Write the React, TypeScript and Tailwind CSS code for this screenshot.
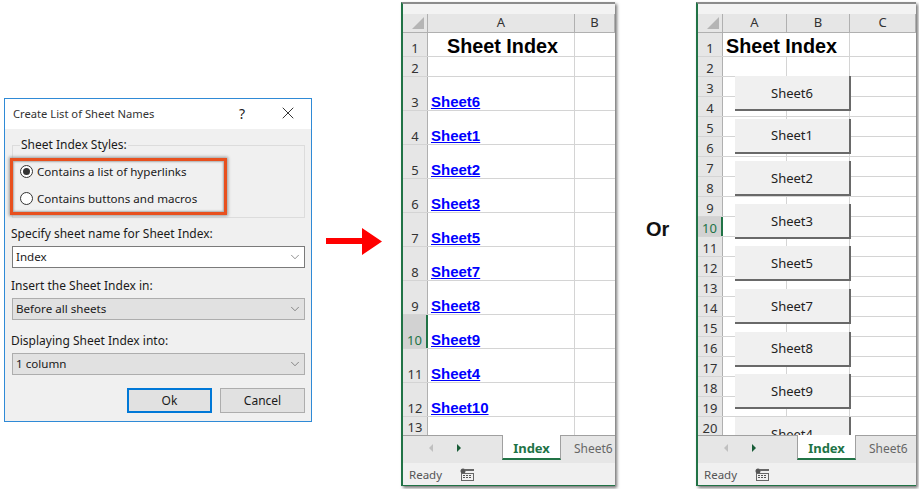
import { ChevronDown, X } from "lucide-react"

const uiFont = "font-['Noto_Sans',sans-serif]"
const cellFont = "font-['Liberation_Sans',Arial,sans-serif]"

function Combo({ value, white }: { value: string; white?: boolean }) {
  return (
    <div
      className={`ml-[7px] flex h-[22px] w-[293px] items-center justify-between pl-[3px] pr-[2px] text-[11.6px] text-[#1a1a1a] border ${
        white ? "border-[#7a7a7a] bg-white" : "border-[#adadad] bg-[#e1e1e1]"
      }`}
    >
      <span>{value}</span>
      <ChevronDown size={14} strokeWidth={1} className="text-[#444]" />
    </div>
  )
}

function Radio({ label, checked }: { label: string; checked?: boolean }) {
  return (
    <div className="flex h-[27px] items-center gap-[4px] pl-[7px] text-[11.6px] text-[#1a1a1a]">
      <div className="flex h-[13px] w-[13px] items-center justify-center rounded-full border border-[#333] bg-white">
        {checked && <div className="h-[7px] w-[7px] rounded-full bg-[#333]" />}
      </div>
      <span>{label}</span>
    </div>
  )
}

function Dialog() {
  return (
    <div className={`mt-[98px] ml-[4px] h-[324px] w-[308px] shrink-0 border border-[#2f8ad6] bg-[#f0f0f0] ${uiFont}`}>
      {/* Title bar */}
      <div className="flex h-[30px] items-center bg-white pl-[8px] text-[11.2px] text-[#333]">
        <span className="w-[226px]">Create List of Sheet Names</span>
        <span className="-mt-[2px] w-[39px] text-[14px] text-[#222]">?</span>
        <X size={20} strokeWidth={1.1} className="-mt-[2px] text-[#222]" />
      </div>

      {/* Styles group */}
      <div className="relative mt-[16px] ml-[7px] h-[73px] w-[293px] border border-[#dcdcdc] pt-[12px]">
        <span className="absolute -top-[9px] left-[7px] bg-[#f0f0f0] px-[1px] text-[12px] leading-[16px] text-[#1a1a1a]">
          Sheet Index Styles:
        </span>
        <Radio label="Contains a list of hyperlinks" checked />
        <Radio label="Contains buttons and macros" />
        <div className="absolute -left-[3px] top-[12px] h-[57px] w-[217px] border-[3px] border-[#e8501e] shadow-[0_0_3px_1px_#999,inset_0_0_2px_1px_#aaa]" />
      </div>

      <div className="mt-[7px] ml-[6px] h-[21px] text-[12px] leading-[18px] text-[#1a1a1a]">
        Specify sheet name for Sheet Index:
      </div>
      <Combo value="Index" white />
      <div className="mt-[9px] ml-[6px] h-[21px] text-[12px] leading-[18px] text-[#1a1a1a]">
        Insert the Sheet Index in:
      </div>
      <Combo value="Before all sheets" />
      <div className="mt-[11px] ml-[6px] h-[22px] pt-px text-[12px] leading-[18px] text-[#1a1a1a]">
        Displaying Sheet Index into:
      </div>
      <Combo value="1 column" />

      {/* Buttons */}
      <div className="mt-[13px] ml-[122px] flex gap-[8px] text-[12px] text-[#1a1a1a]">
        <div className="flex h-[25px] w-[85px] items-center justify-center border-2 border-[#0078d7] bg-[#e1e1e1]">
          Ok
        </div>
        <div className="flex h-[25px] w-[85px] items-center justify-center border border-[#adadad] bg-[#e1e1e1]">
          Cancel
        </div>
      </div>
    </div>
  )
}

function Arrow() {
  return (
    <svg width="56" height="27" viewBox="0 0 56 27" className="mt-[228px] ml-[14px] shrink-0">
      <path d="M0 10h36V0l20 13.5L36 27V16H0z" fill="#ff0000" />
    </svg>
  )
}

function RowNum({ n, active }: { n: number; active?: boolean }) {
  return (
    <div
      className={`flex h-full w-[25px] shrink-0 items-end justify-center border-r border-[#b0b0b0] text-[13px] leading-[16px] ${uiFont} ${
        active ? "border-r-2 border-r-[#217346] bg-[#d2d2d2] text-[#217346]" : "bg-[#e6e6e6] text-[#333]"
      }`}
    >
      {n}
    </div>
  )
}

function TabFooter() {
  return (
    <>
      <div className={`flex h-[28px] shrink-0 border-t border-[#a0a0a0] bg-[#e6e6e6] ${uiFont}`}>
        <div className="flex w-[99px] shrink-0 items-center gap-[24px] pb-[3px] pl-[26px]">
          <div className="h-0 w-0 border-y-[4px] border-r-[4px] border-y-transparent border-r-[#c0c0c0]" />
          <div className="h-0 w-0 border-y-[4px] border-l-[4px] border-y-transparent border-l-[#185c37]" />
        </div>
        <div className="-mt-px flex h-[25px] w-[59px] shrink-0 items-center justify-center border-x border-[#a0a0a0] border-b-[2px] border-b-[#217346] bg-white pt-[4px] text-[13px] font-bold text-[#217346]">
          Index
        </div>
        <div className="pl-[13px] text-[12px] leading-[26px] text-[#666]">Sheet6</div>
      </div>
      <div className={`flex h-[22px] shrink-0 items-center bg-[#f0f0f0] pt-px pl-[6px] text-[11.5px] text-[#555] ${uiFont}`}>
        <span className="w-[51px]">Ready</span>
        <svg width="14" height="13" viewBox="0 0 14 13">
          <circle cx="3" cy="3" r="2.5" fill="#555" />
          <path d="M5 1h9v2H5zM1 5h13v8H1z" fill="#666" />
          <path d="M2 6h11v6H2z" fill="#f0f0f0" />
          <path d="M3 7h2v1H3zM6 7h2v1H6zM9 7h2v1H9zM3 9h2v1H3zM6 9h2v1H6zM9 9h2v1H9z" fill="#555" />
        </svg>
      </div>
    </>
  )
}

function Corner() {
  return (
    <div className="flex h-full w-[25px] shrink-0 items-end justify-end border-r border-[#b0b0b0] bg-[#e6e6e6] pr-[3px] pb-[3px]">
      <div className="h-0 w-0 border-b-[12px] border-l-[12px] border-b-[#b5b5b5] border-l-transparent" />
    </div>
  )
}

function HeadCell({ label, width }: { label: string; width: string }) {
  return (
    <div className={`flex h-full items-center justify-center border-r border-[#b0b0b0] bg-[#e6e6e6] text-[13px] text-[#333] ${uiFont} ${width}`}>
      {label}
    </div>
  )
}

const listRows = [
  [3, "Sheet6"],
  [4, "Sheet1"],
  [5, "Sheet2"],
  [6, "Sheet3"],
  [7, "Sheet5"],
  [8, "Sheet7"],
  [9, "Sheet8"],
  [10, "Sheet9"],
  [11, "Sheet4"],
  [12, "Sheet10"],
] as const

function HyperlinkSheet() {
  return (
    <div className="mt-[2px] ml-[19px] flex h-[484px] w-[214px] shrink-0 flex-col border-t-2 border-b border-l-2 border-t-[#8c8c8c] border-b-[#217346] border-l-[#217346] bg-[#f3f3f3] shadow-[2px_2px_3px_#777]">
      <div className="h-[10px] shrink-0" />
      <div className="flex h-[19px] shrink-0 border-b border-[#b0b0b0]">
        <Corner />
        <HeadCell label="A" width="w-[147px]" />
        <HeadCell label="B" width="flex-1" />
      </div>
      <div className="flex min-h-0 flex-1 flex-col overflow-hidden bg-white">
        <div className="flex h-[24px] shrink-0 border-b border-[#d4d4d4]">
          <RowNum n={1} />
          <div className={`flex w-[147px] items-center justify-center border-r border-[#d4d4d4] pt-[4px] pl-[3px] text-[19.8px] leading-none font-bold text-black ${cellFont}`}>
            Sheet Index
          </div>
        </div>
        <div className="flex h-[20px] shrink-0 border-b border-[#d4d4d4]">
          <RowNum n={2} />
          <div className="w-[147px] border-r border-[#d4d4d4]" />
        </div>
        {listRows.map(([n, name]) => (
          <div key={n} className="flex h-[34px] shrink-0 border-b border-[#d4d4d4]">
            <RowNum n={n} active={n === 10} />
            <div className={`flex w-[147px] items-end border-r border-[#d4d4d4] pl-[3px] text-[15px] leading-[16px] font-bold text-[#0000ff] underline ${cellFont}`}>
              {name}
            </div>
          </div>
        ))}
        <div className="flex h-[18px] shrink-0">
          <RowNum n={13} />
          <div className="w-[147px] border-r border-[#d4d4d4]" />
        </div>
      </div>
      <TabFooter />
    </div>
  )
}

const buttonNames = ["Sheet6", "Sheet1", "Sheet2", "Sheet3", "Sheet5", "Sheet7", "Sheet8", "Sheet9", "Sheet4"]
const macroRows = Array.from({ length: 18 }, (_, i) => i + 3)

function ButtonSheet() {
  return (
    <div className="mt-[2px] ml-[26px] flex h-[484px] w-[220px] shrink-0 flex-col border-t-2 border-b border-l-2 border-t-[#8c8c8c] border-b-[#217346] border-l-[#217346] bg-[#f3f3f3] shadow-[2px_2px_3px_#777]">
      <div className="h-[10px] shrink-0" />
      <div className="flex h-[19px] shrink-0 border-b border-[#b0b0b0]">
        <Corner />
        <HeadCell label="A" width="w-[64px]" />
        <HeadCell label="B" width="w-[63px]" />
        <HeadCell label="C" width="flex-1" />
      </div>
      <div className="relative flex min-h-0 flex-1 flex-col overflow-hidden bg-white">
        <div className="flex h-[24px] shrink-0 border-b border-[#d4d4d4]">
          <RowNum n={1} />
          <div className={`flex w-[127px] items-center border-r border-[#d4d4d4] pt-[4px] pl-[3px] text-[19.8px] leading-none font-bold whitespace-nowrap text-black ${cellFont}`}>
            Sheet Index
          </div>
        </div>
        <div className="flex h-[20px] shrink-0 border-b border-[#d4d4d4]">
          <RowNum n={2} />
          <div className="w-[64px] border-r border-[#d4d4d4]" />
          <div className="w-[63px] border-r border-[#d4d4d4]" />
        </div>
        {macroRows.map((n) => (
          <div key={n} className="flex h-[20px] shrink-0 border-b border-[#d4d4d4]">
            <RowNum n={n} active={n === 10} />
            <div className="w-[64px] border-r border-[#d4d4d4]" />
            <div className="w-[63px] border-r border-[#d4d4d4]" />
          </div>
        ))}

        {/* Buttons float over the grid */}
        <div className="absolute top-[43px] left-[37px] flex flex-col gap-[7.6px]">
          {buttonNames.map((name) => (
            <div
              key={name}
              className={`flex h-[35px] w-[116px] shrink-0 items-center justify-center border-r-2 border-b-2 border-r-[#696969] border-b-[#696969] bg-[#f0f0f0] pt-[2px] text-[13px] text-[#222] ${uiFont}`}
            >
              {name}
            </div>
          ))}
        </div>
      </div>
      <TabFooter />
    </div>
  )
}

export default function App() {
  return (
    <div className="flex h-[489px] w-[919px] items-start overflow-hidden bg-white">
      <Dialog />
      <Arrow />
      <HyperlinkSheet />
      <div className={`mt-[216px] ml-[31px] w-[24px] shrink-0 text-[20px] leading-[26px] font-bold text-[#111] ${cellFont}`}>
        Or
      </div>
      <ButtonSheet />
    </div>
  )
}
